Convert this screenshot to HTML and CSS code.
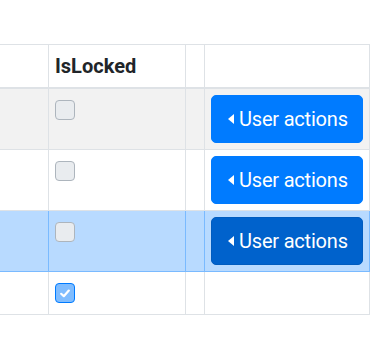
FILE: index.html
```html
<!DOCTYPE html>
<html lang="en">
  <head>
    <meta charset="UTF-8" />
    <meta name="viewport" content="width=device-width, initial-scale=1.0" />
    <title>Users</title>
    <link rel="stylesheet" href="styles.css">
  </head>
  <body>
    <div class="grid-wrap">
      <table class="grid">
        <colgroup>
          <col class="col-name" />
          <col class="col-locked" />
          <col class="col-gap" />
          <col class="col-actions" />
        </colgroup>
        <thead>
          <tr>
            <th></th>
            <th>IsLocked</th>
            <th></th>
            <th></th>
          </tr>
        </thead>
        <tbody>
          <tr class="striped">
            <td></td>
            <td><span class="check"></span></td>
            <td></td>
            <td><button class="btn">User actions</button></td>
          </tr>
          <tr>
            <td></td>
            <td><span class="check"></span></td>
            <td></td>
            <td><button class="btn">User actions</button></td>
          </tr>
          <tr class="selected">
            <td></td>
            <td><span class="check"></span></td>
            <td></td>
            <td><button class="btn active">User actions</button></td>
          </tr>
          <tr>
            <td></td>
            <td>
              <span class="check checked">
                <svg width="10" height="9" viewBox="0 0 10 9"><path d="M1.2 4.8 3.8 7.2 8.8 1.6" fill="none" stroke="#fff" stroke-width="2.2" stroke-linecap="round" stroke-linejoin="round"/></svg>
              </span>
            </td>
            <td></td>
            <td></td>
          </tr>
        </tbody>
      </table>
    </div>
  </body>
</html>
```

FILE: styles.css
```css
* {
  margin: 0;
  padding: 0;
  box-sizing: border-box;
}

body {
  font-family: Roboto, "Open Sans", sans-serif;
  font-size: 20px;
  color: #212529;
  background: #fff;
}

.grid-wrap {
  overflow: hidden;
  padding-top: 44px;
}
.grid {
  margin-left: -101px;
  width: 470px;
  table-layout: fixed;
  border-collapse: collapse;
}
.col-name {
  width: 149px;
}
.col-locked {
  width: 137px;
}
.col-gap {
  width: 19px;
}
.col-actions {
  width: 165px;
}

.grid th,
.grid td {
  border: 1px solid #dee2e6;
  padding: 6px;
  line-height: 30px;
  text-align: left;
  vertical-align: top;
}
.grid th {
  font-weight: 700;
  border-bottom: 2px solid #dee2e6;
}

.striped td {
  background: #f2f2f2;
}
.selected td {
  background: #b8daff;
  border-color: #7abaff;
}

.check {
  display: block;
  width: 20px;
  height: 20px;
  margin: 5px 0;
  border: 1px solid #adb5bd;
  border-radius: 4px;
  background: #e9ecef;
}
.check.checked {
  display: flex;
  align-items: center;
  justify-content: center;
  background: #80bdff;
  border-color: #007bff;
}

.btn {
  display: flex;
  align-items: center;
  width: 152px;
  height: 48px;
  padding: 0 16px;
  border: 1px solid #007bff;
  border-radius: 5px;
  background: #007bff;
  color: #fff;
  font-family: inherit;
  font-size: 20px;
  line-height: 30px;
  letter-spacing: -0.2px;
  white-space: nowrap;
}
.btn::before {
  content: "";
  width: 0;
  height: 0;
  margin-right: 5px;
  border-top: 5px solid transparent;
  border-bottom: 5px solid transparent;
  border-right: 6px solid #fff;
}
.btn.active {
  background: #0062cc;
  border-color: #005cbf;
}
```
